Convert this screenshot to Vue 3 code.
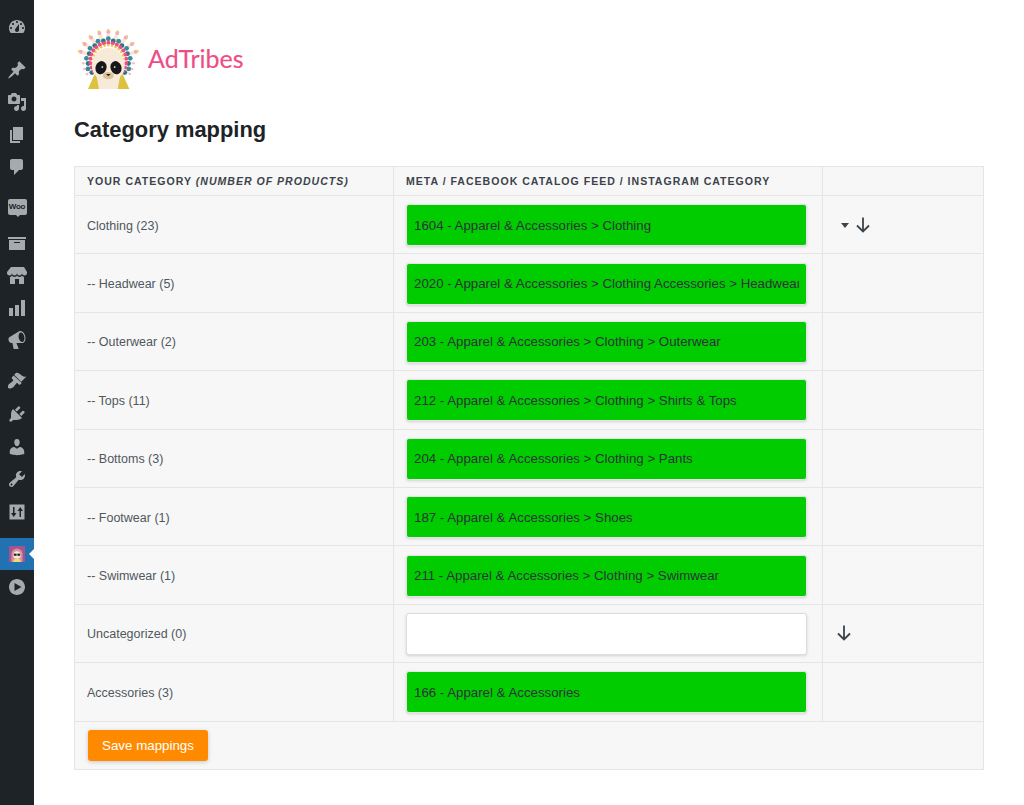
<script setup>
const topIcons = [
  { id: 'dash', d: 'M3.76 16h12.48c1.1-1.37 1.76-3.11 1.76-5 0-4.42-3.58-8-8-8s-8 3.58-8 8c0 1.89.66 3.63 1.76 5zM10 4c.55 0 1 .45 1 1s-.45 1-1 1-1-.45-1-1 .45-1 1-1zM6 6c.55 0 1 .45 1 1s-.45 1-1 1-1-.45-1-1 .45-1 1-1zm8 0c.55 0 1 .45 1 1s-.45 1-1 1-1-.45-1-1 .45-1 1-1zm-5.37 5.55L12 7v6c0 1.1-.9 2-2 2s-2-.9-2-2c0-.57.24-1.08.63-1.45zM4 10c.55 0 1 .45 1 1s-.45 1-1 1-1-.45-1-1 .45-1 1-1zm12 0c.55 0 1 .45 1 1s-.45 1-1 1-1-.45-1-1 .45-1 1-1z', cls: '' },
  { id: 'pin', d: 'M10.44 3.02l1.82-1.82 6.36 6.35-1.83 1.82c-1.05-.68-2.48-.57-3.41.36l-.75.75c-.92.93-1.04 2.35-.35 3.41l-1.83 1.82-2.41-2.41-2.8 2.79c-.42.42-3.38 2.71-3.8 2.29s1.86-3.39 2.28-3.81l2.79-2.79L4.1 9.36l1.83-1.82c1.05.69 2.48.57 3.4-.36l.75-.75c.93-.92 1.05-2.35.36-3.41z', cls: 'after-dash' },
  { id: 'media', d: 'M13 11V4c0-.55-.45-1-1-1h-1.67L9 1H5L3.67 3H2c-.55 0-1 .45-1 1v7c0 .55.45 1 1 1h10c.55 0 1-.45 1-1zM7 4.5c1.38 0 2.5 1.12 2.5 2.5S8.38 9.5 7 9.5 4.5 8.38 4.5 7 5.62 4.5 7 4.5zM14 6h5v10.5c0 1.38-1.12 2.5-2.5 2.5S14 17.88 14 16.5s1.12-2.5 2.5-2.5c.17 0 .34.02.5.05V9h-3V6zm-4 8.05V13h2v3.5c0 1.38-1.12 2.5-2.5 2.5S7 17.88 7 16.5 8.12 14 9.5 14c.17 0 .34.02.5.05z', cls: '' },
  { id: 'pages', d: 'M6 15V2h10v13H6zm-1 1h8v2H3V5h2v11z', cls: '' },
  { id: 'comments', d: 'M5 2h9c1.1 0 2 .9 2 2v7c0 1.1-.9 2-2 2h-2l-5 5v-5H5c-1.1 0-2-.9-2-2V4c0-1.1.9-2 2-2z', cls: '' }
]
const shopIcons = [
  { id: 'archive', d: 'M19 4v2H1V4h18zM2 7h16v10H2V7zm11 3V9H7v1h6z' },
  { id: 'store', d: 'M1 10c.41.29.96.43 1.5.43.55 0 1.09-.14 1.5-.43.62-.46 1-1.17 1-2 0 .83.37 1.54 1 2 .41.29.96.43 1.5.43.55 0 1.09-.14 1.5-.43.62-.46 1-1.17 1-2 0 .83.37 1.54 1 2 .41.29.96.43 1.51.43.54 0 1.08-.14 1.49-.43.62-.46 1-1.17 1-2 0 .83.37 1.54 1 2 .41.29.96.43 1.5.43.55 0 1.09-.14 1.5-.43.63-.46 1-1.17 1-2V7l-3-5H4L0 7v1c0 .83.37 1.54 1 2zm2 8.99h5v-5h4v5h5v-7c-.37-.05-.72-.22-1-.43-.63-.45-1-.73-1-1.56 0 .83-.38 1.11-1 1.56-.41.3-.95.43-1.49.44-.55 0-1.1-.14-1.51-.44-.63-.45-1-.73-1-1.56 0 .83-.38 1.11-1 1.56-.41.3-.95.43-1.5.44-.54 0-1.09-.14-1.5-.44-.63-.45-1-.73-1-1.57 0 .84-.38 1.12-1 1.57-.29.21-.63.38-1 .44v6.99z' },
  { id: 'chart', d: 'M18 18V2h-4v16h4zm-6 0V7H8v11h4zm-6 0v-8H2v8h4z' },
  { id: 'mega', d: 'M18.15 5.94c.46 1.62.38 3.22-.02 4.48-.42 1.28-1.26 2.18-2.3 2.48-.16.06-.26.06-.4.06-.06.02-.12.02-.18.02-.06.02-.14.02-.22.02H9.4l2.22 5.5c.02.14-.06.26-.14.34-.08.1-.24.16-.34.16H6.95c-.1 0-.26-.06-.34-.16-.08-.08-.16-.2-.14-.34l-1-5.5H4.25l-.02-.02c-.5.06-1.08-.18-1.54-.62s-.88-1.08-1.06-1.88c-.24-.8-.2-1.56-.02-2.2.18-.62.58-1.08 1.06-1.3l.02-.02 9-5.4c.1-.06.18-.1.24-.16.06-.04.14-.08.24-.12.16-.08.28-.12.5-.18 1.04-.3 2.24.1 3.22.98s1.84 2.24 2.26 3.86zm-2.58 5.98h-.02c.4-.1.74-.34 1.04-.7.58-.7.86-1.76.86-3.04-.02-.64-.1-1.3-.3-1.98-.18-.7-.48-1.32-.84-1.88-.34-.56-.74-1-1.16-1.3-.44-.32-.9-.48-1.34-.48-.12 0-.24 0-.36.04-.4.1-.74.34-1.04.7-.56.7-.86 1.76-.84 3.04 0 .64.08 1.3.26 2 .2.68.5 1.32.84 1.86.36.56.76 1 1.18 1.32.42.3.88.46 1.34.46.12 0 .24-.02.38-.04z' }
]
const adminIcons = [
  { id: 'brush', d: 'M19.500 4.500c-2 .4-3.270-.21-4.450-.85-1.480-.82-1.700-1.300-2.910-2.100-1.210-.79-3.010-.88-3.510-.32l-1.500 1.500 7.070 7.070zM6.700 3.400L4.930 5.170c-.39.39-.39 1.020 0 1.410l1.060 1.060c.39.39.39 1.030 0 1.420-.6.6-1.430 1.110-2.210 1.690-.35.26-.7.53-1.010.84C1.430 11.930.4 15.200 1.300 16.100c.91.9 4.170-.13 5.510-1.470.31-.31.58-.66.85-1.010.57-.78 1.080-1.610 1.690-2.210.39-.39 1.020-.39 1.410 0l1.060 1.060c.39.39 1.020.39 1.410 0l1.550-1.550z' },
  { id: 'plug', d: 'M13.11 4.36L9.87 7.6 8 5.73l3.24-3.24c.35-.34 1.05-.2 1.56.32.52.51.66 1.21.31 1.55zm-8 1.77l.91-1.12 9.01 9.01-1.19.84c-.71.71-2.63 1.16-3.82 1.16H6.14L4.9 17.26c-.59.59-1.54.59-2.12 0-.59-.58-.59-1.53 0-2.12l1.24-1.24v-3.88c0-1.13.4-3.19 1.09-3.89zm7.26 3.97l3.24-3.24c.34-.35 1.04-.21 1.55.31.52.51.66 1.21.31 1.55l-3.24 3.25z' },
  { id: 'user', d: 'M10 9.25c-2.27 0-2.73-3.44-2.73-3.44C7 4.02 7.82 2 9.97 2c2.16 0 2.98 2.02 2.71 3.81 0 0-.41 3.44-2.68 3.44zm0 2.57L12.72 10c2.39 0 4.52 2.33 4.52 4.53v2.49s-3.65 1.13-7.24 1.13c-3.65 0-7.24-1.13-7.24-1.13v-2.49c0-2.25 1.94-4.48 4.47-4.48z' },
  { id: 'tools', d: 'M16.68 9.77c-1.34 1.34-3.3 1.67-4.95.99l-5.41 6.52c-.99.99-2.59.99-3.58 0s-.99-2.59 0-3.57l6.52-5.42c-.68-1.65-.35-3.61.99-4.95 1.28-1.28 3.12-1.62 4.72-1.06l-2.89 2.89 2.82 2.82 2.86-2.87c.53 1.58.18 3.39-1.08 4.65zM3.81 16.21c.4.39 1.04.39 1.43 0 .4-.4.4-1.04 0-1.43-.39-.4-1.03-.4-1.43 0-.39.39-.39 1.03 0 1.43z' },
  { id: 'sort', d: 'M2.500 2.500h15v15h-15zM6 5v6H4l2.750 4 2.750-4h-2V5zM12.500 15v-6h-2l2.750-4 2.750 4h-2v6z' }
]

const rows = [
  { name: 'Clothing (23)', value: '1604 - Apparel & Accessories > Clothing', arrow: 'caret' },
  { name: '-- Headwear (5)', value: '2020 - Apparel & Accessories > Clothing Accessories > Headwear' },
  { name: '-- Outerwear (2)', value: '203 - Apparel & Accessories > Clothing > Outerwear' },
  { name: '-- Tops (11)', value: '212 - Apparel & Accessories > Clothing > Shirts & Tops' },
  { name: '-- Bottoms (3)', value: '204 - Apparel & Accessories > Clothing > Pants' },
  { name: '-- Footwear (1)', value: '187 - Apparel & Accessories > Shoes' },
  { name: '-- Swimwear (1)', value: '211 - Apparel & Accessories > Clothing > Swimwear' },
  { name: 'Uncategorized (0)', value: '', arrow: 'plain' },
  { name: 'Accessories (3)', value: '166 - Apparel & Accessories' }
]

const cx = 97
const cy = 110
const polar = (r, deg) => {
  const a = ((deg - 90) * Math.PI) / 180
  return { x: cx + r * Math.cos(a), y: cy + r * Math.sin(a) }
}
const mainAngles = [-72, -55, -37, -18, 0, 18, 37, 55, 72]
const beads = mainAngles.flatMap(deg => [
  { ...polar(87, deg), r: 6, fill: '#f6a6bf' },
  { ...polar(92, deg), r: 3.6, fill: '#f0d25c' }
])
const sideAngles = [-122, -109, -96, 96, 109, 122]
const sideBeads = sideAngles.map(deg => ({ ...polar(76, deg), r: 3.8, fill: '#f7b9cc' }))
const sticks = [...mainAngles.map(deg => ({ a: polar(58, deg), b: polar(84, deg), w: 11 })), ...sideAngles.map(deg => ({ a: polar(58, deg), b: polar(74, deg), w: 5 }))]
const arc = Array.from({ length: 19 }, (_, i) => -126 + i * 14)
const teal = arc.map((deg, i) => ({ ...polar(i % 2 ? 66 : 61, deg), r: 7.2, fill: i % 2 ? '#3f8a99' : '#2f7485' }))
const pink = arc.map(deg => ({ ...polar(54, deg), r: 6, fill: '#ec4d85' }))
const gold = arc.map(deg => ({ ...polar(46, deg), r: 3.8, fill: '#efc94c' }))
</script>

<template>
  <div class="page">
    <aside class="sidebar">
      <svg v-for="icon in topIcons" :key="icon.id" :class="['icon', icon.cls]" viewBox="0 0 20 20">
        <path :d="icon.d" fill-rule="evenodd" />
      </svg>
      <div class="woo"><span>Woo</span></div>
      <svg v-for="icon in shopIcons" :key="icon.id" class="icon" viewBox="0 0 20 20">
        <path :d="icon.d" fill-rule="evenodd" />
      </svg>
      <svg v-for="(icon, i) in adminIcons" :key="icon.id" :class="['icon', { 'group-start': i === 0 }]" viewBox="0 0 20 20">
        <path :d="icon.d" fill-rule="evenodd" />
      </svg>
      <div class="active">
        <svg class="mini" viewBox="0 0 16 16">
          <rect width="16" height="16" fill="#a5548f" />
          <path d="M2.500 16V8a5.500 5.500 0 0 1 11 0v8z" fill="#d98fa0" />
          <circle cx="8" cy="9" r="3.800" fill="#f7ecd9" />
          <rect x="4.800" y="7.600" width="2.800" height="2.200" fill="#222" />
          <rect x="8.400" y="7.600" width="2.800" height="2.200" fill="#222" />
          <path d="M4 16l1.500-3h5l1.500 3z" fill="#f0dc6a" />
        </svg>
      </div>
      <svg class="icon" viewBox="0 0 20 20">
        <path d="M10 2c4.420 0 8 3.580 8 8s-3.580 8-8 8-8-3.580-8-8 3.580-8 8-8zM7.500 14l7-4-7-4z" fill-rule="evenodd" />
      </svg>
    </aside>

    <main class="content">
      <div class="brand">
        <svg class="logo" viewBox="0 0 198 210">
          <line v-for="(s, i) in sticks" :key="'s' + i" :x1="s.a.x" :y1="s.a.y" :x2="s.b.x" :y2="s.b.y" stroke="#f6e8d5" :stroke-width="s.w" stroke-linecap="round" />
          <circle v-for="(b, i) in beads" :key="'b' + i" :cx="b.x" :cy="b.y" :r="b.r" :fill="b.fill" />
          <circle v-for="(b, i) in sideBeads" :key="'d' + i" :cx="b.x" :cy="b.y" :r="b.r" :fill="b.fill" />
          <circle v-for="(f, i) in teal" :key="'t' + i" :cx="f.x" :cy="f.y" :r="f.r" :fill="f.fill" />
          <circle v-for="(f, i) in pink" :key="'p' + i" :cx="f.x" :cy="f.y" :r="f.r" :fill="f.fill" />
          <circle v-for="(f, i) in gold" :key="'g' + i" :cx="f.x" :cy="f.y" :r="f.r" :fill="f.fill" />
          <path d="M36 195L56 150H140L160 195Z" fill="#dcc23f" />
          <path d="M48 125c0-30 22-53 49-53s49 23 49 53c0 14-4 24-14 34l-7 36H69l-7-36C52 149 48 139 48 125z" fill="#f8ead8" />
          <ellipse cx="75" cy="131" rx="16.500" ry="20" transform="rotate(20 75 131)" fill="#17181a" />
          <ellipse cx="120" cy="131" rx="16.500" ry="20" transform="rotate(-20 120 131)" fill="#17181a" />
          <circle cx="79" cy="129" r="2.600" fill="#fff" />
          <circle cx="116" cy="129" r="2.600" fill="#fff" />
          <ellipse cx="97" cy="155" rx="16" ry="11" fill="#d9c295" />
          <path d="M90 150h14l-7 7z" fill="#2a2623" />
        </svg>
        <span class="wordmark">AdTribes</span>
      </div>

      <h1 class="title">Category mapping</h1>

      <table class="mapping">
        <colgroup>
          <col class="col-a" />
          <col class="col-b" />
          <col />
        </colgroup>
        <thead>
          <tr>
            <th>Your category <em>(Number of products)</em></th>
            <th>Meta / Facebook Catalog Feed / Instagram category</th>
            <th></th>
          </tr>
        </thead>
        <tbody>
          <tr v-for="row in rows" :key="row.name" class="row">
            <td class="label">{{ row.name }}</td>
            <td>
              <input class="field" :class="{ filled: row.value }" type="text" readonly :value="row.value" />
            </td>
            <td>
              <div v-if="row.arrow === 'caret'" class="arrows caret-row">
                <span class="caret"></span>
                <svg class="down" viewBox="0 0 14 16"><path d="M7 .5v14M1 8.500l6 6 6-6" /></svg>
              </div>
              <div v-else-if="row.arrow === 'plain'" class="arrows plain-row">
                <svg class="down" viewBox="0 0 14 16"><path d="M7 .5v14M1 8.500l6 6 6-6" /></svg>
              </div>
            </td>
          </tr>
        </tbody>
        <tfoot>
          <tr>
            <td colspan="3" class="foot"><button class="save" type="button">Save mappings</button></td>
          </tr>
        </tfoot>
      </table>
    </main>
  </div>
</template>

<style>
html, body { margin: 0; background: #fff; }
</style>

<style scoped>
.page {
  display: flex;
  height: 805px;
  overflow: hidden;
  font-family: "Liberation Sans", Arial, sans-serif;
  color: #50575e;
}
.sidebar {
  width: 34px;
  flex: none;
  background: #1d2327;
  display: flex;
  flex-direction: column;
  align-items: center;
  padding-top: 17px;
  box-sizing: border-box;
}
.icon {
  width: 20px;
  height: 20px;
  flex: none;
  fill: #a7aaad;
  margin-bottom: 12.400px;
}
.after-dash { margin-top: 10.500px; }
.group-start { margin-top: 9.500px; }
.woo {
  width: 19px;
  height: 16px;
  flex: none;
  background: #a7aaad;
  border-radius: 2px;
  display: flex;
  align-items: center;
  justify-content: center;
  margin-top: 10px;
  margin-bottom: 17.500px;
  position: relative;
}
.woo::after {
  content: "";
  position: absolute;
  left: 8px;
  bottom: -2px;
  border-left: 2px solid transparent;
  border-right: 2px solid transparent;
  border-top: 2px solid #a7aaad;
}
.woo span {
  font-size: 8px;
  font-weight: 700;
  letter-spacing: -0.3px;
  color: #1d2327;
  line-height: 1;
}
.active {
  position: relative;
  width: 100%;
  height: 32px;
  flex: none;
  background: #2271b1;
  display: flex;
  align-items: center;
  justify-content: center;
  margin-top: 4.500px;
  margin-bottom: 7px;
}
.active::after {
  content: "";
  position: absolute;
  right: 0;
  top: 11px;
  border-top: 5px solid transparent;
  border-bottom: 5px solid transparent;
  border-right: 5px solid #fff;
}
.mini { width: 16px; height: 16px; display: block; }

.content {
  flex: 1;
  padding: 0 40px;
  min-width: 0;
}
.brand {
  display: flex;
  align-items: center;
  gap: 6px;
  padding: 24px 0 0 2px;
  height: 70px;
}
.logo { width: 66px; height: 70px; flex: none; }
.wordmark {
  font-family: Lato, sans-serif;
  font-size: 25px;
  -webkit-text-stroke: 0.150px #ee4c85;
  color: #ee4c85;
  margin-top: -3px;
}
.title {
  margin: 23px 0 23px;
  font-size: 21.900px;
  line-height: 26px;
  font-weight: 700;
  color: #1d2327;
}
.mapping {
  width: 910px;
  table-layout: fixed;
  border-collapse: collapse;
  background: #f7f7f7;
  font-size: 12.500px;
}
.col-a { width: 319px; }
.col-b { width: 429px; }
.mapping th, .mapping td {
  border: 1px solid #e5e5e5;
  padding: 0 12px;
  text-align: left;
  vertical-align: middle;
}
.mapping th {
  height: 28px;
  font-size: 10.560px;
  font-weight: 700;
  letter-spacing: 1px;
  text-transform: uppercase;
  color: #3c434a;
  white-space: nowrap;
}
.row td { height: 58.400px; box-sizing: border-box; }
.mapping .label { padding-top: 2px; }
.field {
  display: block;
  box-sizing: border-box;
  width: 401px;
  height: 42px;
  margin: 1px 0 0;
  padding: 0 7px;
  border: 1px solid #ddd;
  border-radius: 3px;
  background: #fff;
  box-shadow: 0 1px 3px rgba(0, 0, 0, 0.15);
  font: 13.280px "Liberation Sans", Arial, sans-serif;
  color: #2c3338;
  outline: none;
}
.field.filled {
  background: #00cc00;
  border-color: #e5e5e5;
}
.arrows {
  display: flex;
  align-items: center;
}
.caret-row { padding-left: 6px; gap: 7px; }
.plain-row { padding-left: 2px; }
.caret {
  width: 0;
  height: 0;
  margin-top: 2px;
  border-left: 4px solid transparent;
  border-right: 4px solid transparent;
  border-top: 5px solid #3c434a;
}
.down {
  width: 14px;
  height: 16px;
  fill: none;
  stroke: #3c434a;
  stroke-width: 1.800;
}
.mapping .foot {
  height: 47.500px;
  padding: 0 13px;
}
.save {
  display: block;
  width: 120px;
  height: 31px;
  border: 0;
  border-radius: 3px;
  background: #ff8a00;
  color: #fff;
  font: 13.330px "Liberation Sans", Arial, sans-serif;
  box-shadow: 0 1px 4px rgba(0, 0, 0, 0.2);
  padding: 0;
}
</style>
